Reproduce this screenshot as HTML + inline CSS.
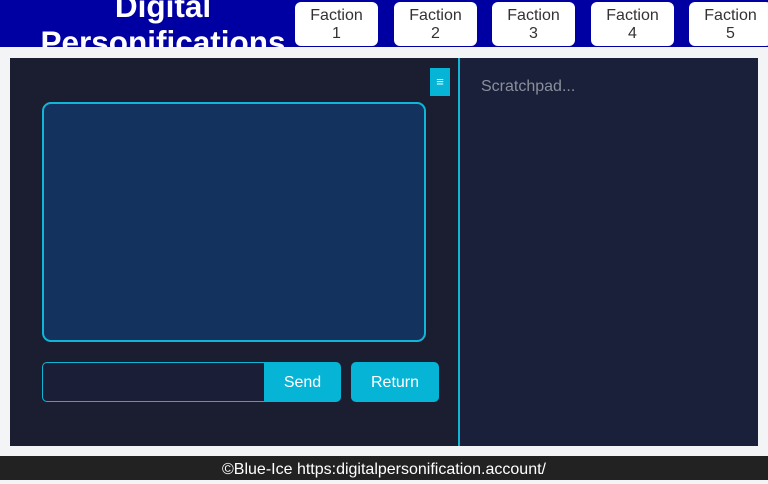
<!DOCTYPE html>
<html><head><style>
*{margin:0;padding:0;box-sizing:border-box}
body{width:768px;height:480px;background:#f3f4f6;font-family:"Liberation Sans",sans-serif;position:relative;overflow:hidden}
.hdr{position:absolute;left:0;top:0;width:768px;height:47px;background:#0000a2;overflow:hidden}
.title{position:absolute;left:13px;width:300px;top:-12px;text-align:center;color:#fff;font-weight:bold;font-size:31.5px;line-height:36px}
.fb{position:absolute;top:2px;height:44px;width:83px;background:#fff;border-radius:6px;text-align:center;color:#333;font-size:16px;line-height:18px;padding-top:5px}
.main{position:absolute;left:10px;top:58px;width:748px;height:388px;background:#1b1e30}
.right{position:absolute;left:458px;top:58px;width:300px;height:388px;background:#1a2039;border-left:2px solid #13b5d6}
.sp{position:absolute;left:481px;top:78px;color:#8a8f9c;font-size:16px}
.menu{position:absolute;left:430px;top:68px;width:20px;height:28px;background:#06b4d6;color:#fff;font-size:13px;text-align:center;line-height:28px}
.ta{position:absolute;left:42px;top:102px;width:384px;height:240px;border:2px solid #13b5d6;border-radius:9px;background:#13325e}
.inp{position:absolute;left:42px;top:362px;width:224px;height:40px;border:1px solid #13b5d6;border-radius:5px 0 0 5px;background:#1a1f37}
.btn{position:absolute;top:362px;height:40px;background:#06b4d6;color:#fff;font-size:16px;text-align:center;line-height:41px}
.ft{position:absolute;left:0;top:456px;width:768px;height:24px;background:#222;color:#fff;font-size:16px;text-align:center;line-height:28px}
</style></head><body>
<div class="hdr"><div class="title">Digital<br>Personifications</div>
<div class="fb" style="left:295px">Faction<br>1</div>
<div class="fb" style="left:394px">Faction<br>2</div>
<div class="fb" style="left:492px">Faction<br>3</div>
<div class="fb" style="left:591px">Faction<br>4</div>
<div class="fb" style="left:689px">Faction<br>5</div>
</div>
<div class="main"></div>
<div class="right"></div>
<div class="sp">Scratchpad...</div>
<div class="menu">≡</div>
<div class="ta"></div>
<div class="inp"></div>
<div class="btn" style="left:264px;width:77px;border-radius:0 5px 5px 0">Send</div>
<div class="btn" style="left:351px;width:88px;border-radius:5px">Return</div>
<div class="ft">©Blue-Ice https:digitalpersonification.account/</div>
</body></html>
